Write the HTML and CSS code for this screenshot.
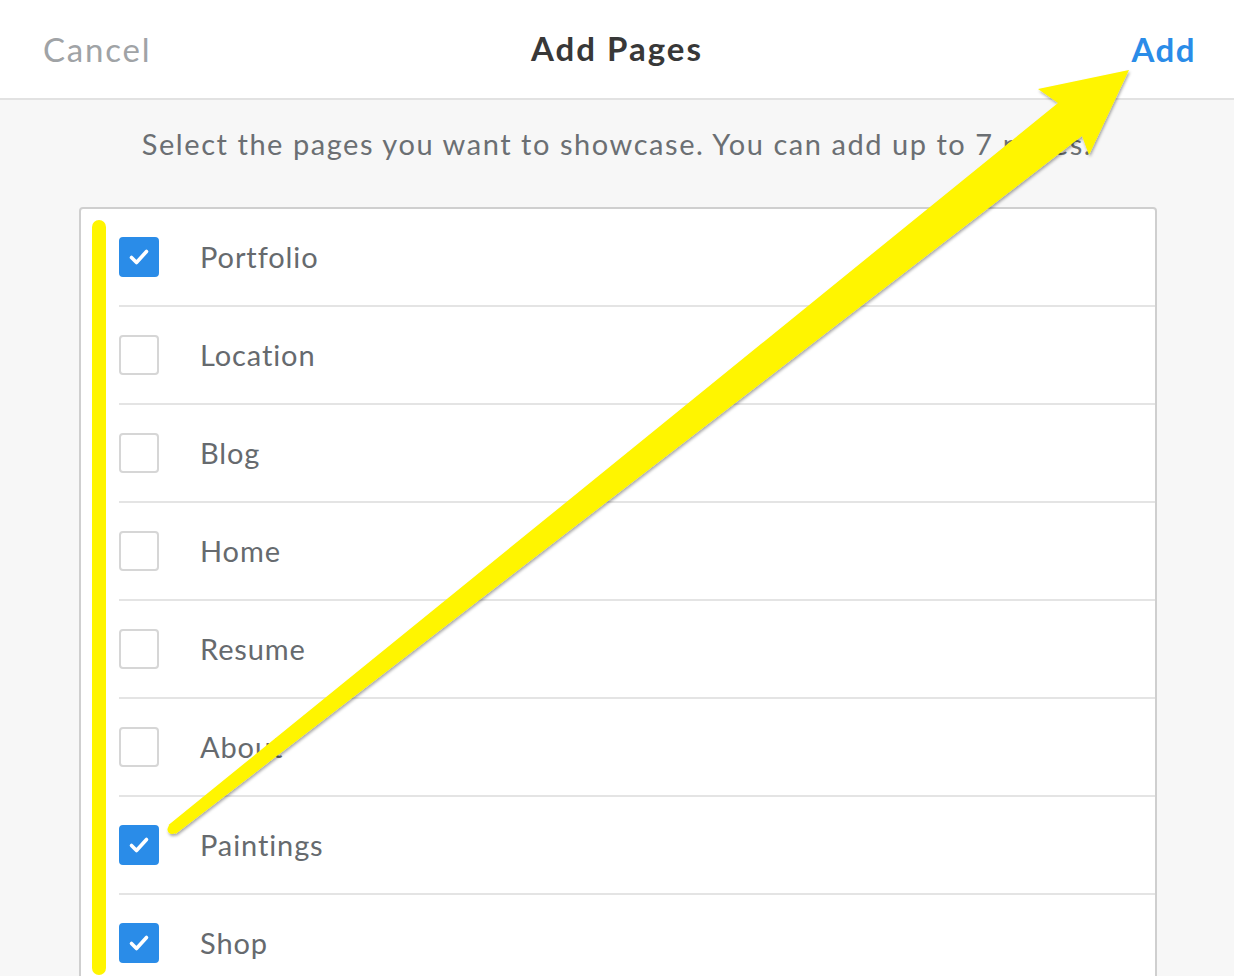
FILE: index.html
```html
<!DOCTYPE html>
<html>
<head>
<meta charset="utf-8">
<link rel="stylesheet" href="styles.css">
</head>
<body>
<div class="screen">
  <header class="topbar">
    <span class="cancel">Cancel</span>
    <span class="title">Add Pages</span>
    <span class="add">Add</span>
  </header>
  <main class="content">
    <p class="hint">Select the pages you want to showcase. You can add up to 7 pages.</p>
    <div class="card">
      <div class="row"><span class="box checked"><svg viewBox="0 0 40 40"><path d="M12.5 20.5 L17.5 25.5 L27.5 14.5" /></svg></span><span class="label">Portfolio</span></div>
      <div class="row"><span class="box"></span><span class="label">Location</span></div>
      <div class="row"><span class="box"></span><span class="label">Blog</span></div>
      <div class="row"><span class="box"></span><span class="label">Home</span></div>
      <div class="row"><span class="box"></span><span class="label">Resume</span></div>
      <div class="row"><span class="box"></span><span class="label">About</span></div>
      <div class="row"><span class="box checked"><svg viewBox="0 0 40 40"><path d="M12.5 20.5 L17.5 25.5 L27.5 14.5" /></svg></span><span class="label">Paintings</span></div>
      <div class="row"><span class="box checked"><svg viewBox="0 0 40 40"><path d="M12.5 20.5 L17.5 25.5 L27.5 14.5" /></svg></span><span class="label">Shop</span></div>
    </div>
  </main>
  <div class="mark-bar"></div>
  <svg class="arrow" viewBox="0 0 1234 976" width="1234" height="976">
    <defs>
      <filter id="sh" x="-10%" y="-10%" width="120%" height="120%">
        <feDropShadow dx="1" dy="2" stdDeviation="1.5" flood-color="#000" flood-opacity="0.35"/>
      </filter>
    </defs>
    <g filter="url(#sh)" fill="#fff500">
      <polygon points="168.5,825 1058,103 1038,89 1129,70 1089,155 1082,136 175.5,834"/>
      <circle cx="172" cy="829.5" r="4.5"/>
    </g>
  </svg>
</div>
</body>
</html>
```
FILE: styles.css
```css
html, body {
  margin: 0;
  padding: 0;
}
body {
  width: 1234px;
  height: 976px;
  overflow: hidden;
  background: #f7f7f7;
  font-family: "Lato", "Liberation Sans", sans-serif;
}
.screen {
  position: relative;
  width: 1234px;
  height: 976px;
  overflow: hidden;
}
.topbar {
  height: 100px;
  background: #fff;
  border-bottom: 2px solid #e2e2e2;
  box-sizing: border-box;
  display: flex;
  align-items: center;
  justify-content: space-between;
  padding: 0 38px 0 43px;
  position: relative;
}
.cancel {
  font-size: 33px;
  color: #a0a3a6;
  letter-spacing: 1.8px;
}
.title {
  position: absolute;
  left: 0;
  right: 0;
  text-align: center;
  font-size: 33px;
  font-weight: 700;
  color: #383838;
  top: 28px;
  letter-spacing: 2px;
  pointer-events: none;
}
.add {
  font-size: 33px;
  font-weight: 700;
  color: #2a8ce8;
  letter-spacing: 1.5px;
}
.content {
  padding-top: 24px;
}
.hint {
  margin: 0;
  text-align: center;
  font-size: 29px;
  color: #6b6f73;
  letter-spacing: 1.55px;
  line-height: 40px;
}
.card {
  margin: 43px 0 0 79px;
  width: 1078px;
  background: #fff;
  border: 2px solid #cfcfcf;
  border-radius: 4px;
  box-sizing: border-box;
  padding-left: 38px;
}
.row {
  height: 98px;
  display: flex;
  align-items: center;
  border-top: 2px solid #e4e4e4;
  box-sizing: border-box;
}
.row:first-child {
  border-top: none;
  height: 96px;
}
.box {
  width: 40px;
  height: 40px;
  border: 2px solid #d6d6d6;
  border-radius: 4px;
  box-sizing: border-box;
  flex: none;
  display: flex;
}
.box.checked {
  background: #2a8ce8;
  border-color: #2a8ce8;
}
.box svg {
  width: 40px;
  height: 40px;
  margin: -2px;
}
.box svg path {
  fill: none;
  stroke: #fff;
  stroke-width: 3.6;
  stroke-linecap: round;
  stroke-linejoin: round;
}
.label {
  margin-left: 41px;
  font-size: 29px;
  color: #666a6e;
  letter-spacing: 0.9px;
  position: relative;
  top: -1px;
}
.mark-bar {
  position: absolute;
  left: 92px;
  top: 220px;
  width: 14px;
  height: 755px;
  border-radius: 7px;
  background: #fff500;
}
.arrow {
  position: absolute;
  left: 0;
  top: 0;
  pointer-events: none;
}
```
